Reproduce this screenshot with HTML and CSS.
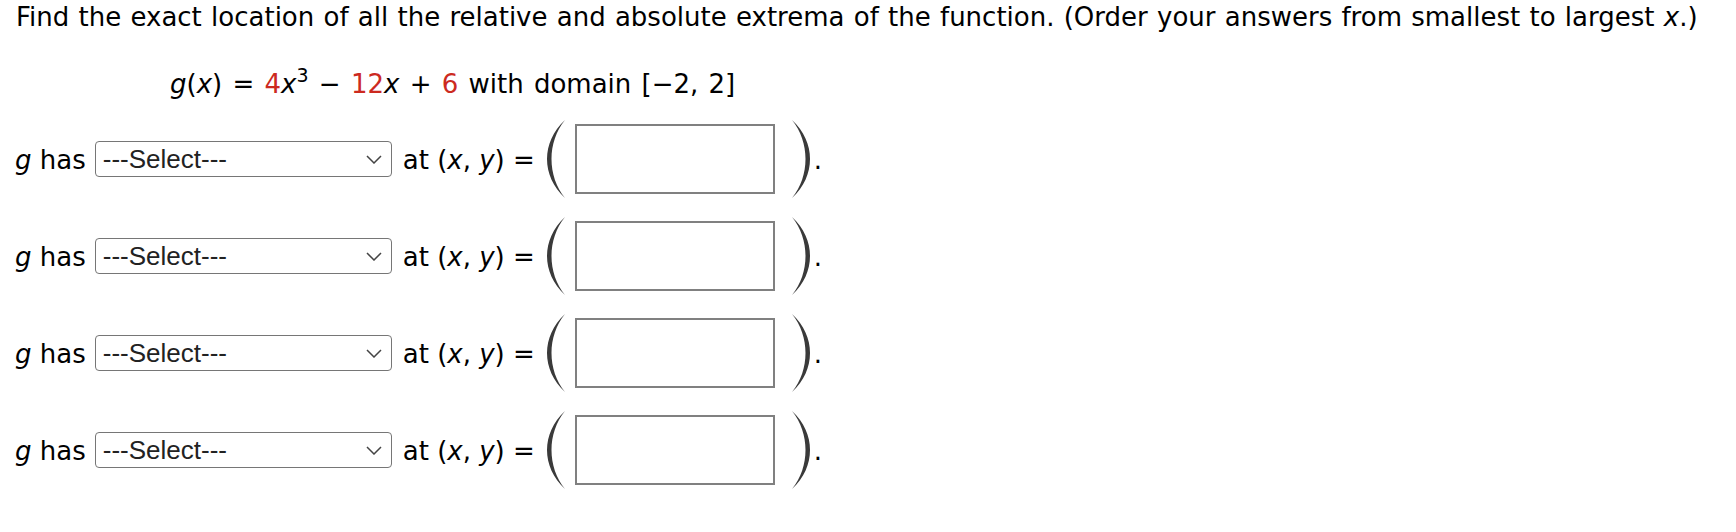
FILE: index.html
```html
<!DOCTYPE html>
<html lang="en">
<head>
<meta charset="utf-8">
<title>Extrema</title>
<link rel="stylesheet" href="styles.css">
</head>
<body>
<div class="page">
  <div class="title">Find the exact location of all the relative and absolute extrema of the function. (Order your answers from smallest to largest <i>x</i>.)</div>
  <div class="formula"><i>g</i>(<i>x</i>) = <span class="red">4</span><i>x</i><sup>3</sup> − <span class="red">12</span><i>x</i> + <span class="red">6</span> with domain [−2, 2]</div>

  <div class="rows">
    <div class="row">
      <span class="label"><i>g</i> has</span>
      <span class="sel-wrap"><select class="sel"><option>---Select---</option></select><svg class="chev" viewBox="0 0 16 9" width="16" height="9"><path d="M1 1 L8 8 L15 1" fill="none" stroke="#444" stroke-width="1.5"/></svg></span>
      <span class="at">at (<i>x</i>, <i>y</i>) =</span>
      <svg class="paren" viewBox="0 0 24 78" width="24" height="78"><path d="M22 0 C-2 22 -2 56 22 78 C4 56 4 22 22 0 Z" fill="#3a3a3a"/></svg>
      <input class="ans" type="text">
      <svg class="paren rp" viewBox="0 0 24 78" width="24" height="78"><path d="M2 0 C26 22 26 56 2 78 C20 56 20 22 2 0 Z" fill="#3a3a3a"/></svg>
      <span class="dot">.</span>
    </div>
    <div class="row">
      <span class="label"><i>g</i> has</span>
      <span class="sel-wrap"><select class="sel"><option>---Select---</option></select><svg class="chev" viewBox="0 0 16 9" width="16" height="9"><path d="M1 1 L8 8 L15 1" fill="none" stroke="#444" stroke-width="1.5"/></svg></span>
      <span class="at">at (<i>x</i>, <i>y</i>) =</span>
      <svg class="paren" viewBox="0 0 24 78" width="24" height="78"><path d="M22 0 C-2 22 -2 56 22 78 C4 56 4 22 22 0 Z" fill="#3a3a3a"/></svg>
      <input class="ans" type="text">
      <svg class="paren rp" viewBox="0 0 24 78" width="24" height="78"><path d="M2 0 C26 22 26 56 2 78 C20 56 20 22 2 0 Z" fill="#3a3a3a"/></svg>
      <span class="dot">.</span>
    </div>
    <div class="row">
      <span class="label"><i>g</i> has</span>
      <span class="sel-wrap"><select class="sel"><option>---Select---</option></select><svg class="chev" viewBox="0 0 16 9" width="16" height="9"><path d="M1 1 L8 8 L15 1" fill="none" stroke="#444" stroke-width="1.5"/></svg></span>
      <span class="at">at (<i>x</i>, <i>y</i>) =</span>
      <svg class="paren" viewBox="0 0 24 78" width="24" height="78"><path d="M22 0 C-2 22 -2 56 22 78 C4 56 4 22 22 0 Z" fill="#3a3a3a"/></svg>
      <input class="ans" type="text">
      <svg class="paren rp" viewBox="0 0 24 78" width="24" height="78"><path d="M2 0 C26 22 26 56 2 78 C20 56 20 22 2 0 Z" fill="#3a3a3a"/></svg>
      <span class="dot">.</span>
    </div>
    <div class="row">
      <span class="label"><i>g</i> has</span>
      <span class="sel-wrap"><select class="sel"><option>---Select---</option></select><svg class="chev" viewBox="0 0 16 9" width="16" height="9"><path d="M1 1 L8 8 L15 1" fill="none" stroke="#444" stroke-width="1.5"/></svg></span>
      <span class="at">at (<i>x</i>, <i>y</i>) =</span>
      <svg class="paren" viewBox="0 0 24 78" width="24" height="78"><path d="M22 0 C-2 22 -2 56 22 78 C4 56 4 22 22 0 Z" fill="#3a3a3a"/></svg>
      <input class="ans" type="text">
      <svg class="paren rp" viewBox="0 0 24 78" width="24" height="78"><path d="M2 0 C26 22 26 56 2 78 C20 56 20 22 2 0 Z" fill="#3a3a3a"/></svg>
      <span class="dot">.</span>
    </div>
  </div>
</div>
</body>
</html>
```

FILE: styles.css
```css
html, body {
  margin: 0;
  padding: 0;
  background: #fff;
}
body {
  font-family: "DejaVu Sans", Verdana, sans-serif;
  font-size: 26px;
  color: #000;
}
.page {
  padding: 3px 16px 0 16px;
}
.title {
  line-height: 29px;
  white-space: nowrap;
  word-spacing: 1px;
}
.formula {
  margin-top: 38px;
  padding-left: 154px;
  line-height: 29px;
  white-space: nowrap;
  word-spacing: 2px;
}
.formula sup {
  font-size: 19px;
  line-height: 0;
  vertical-align: 11px;
}
.red {
  color: #cc2a1f;
}
.rows {
  margin-top: 21px;
  display: flex;
  flex-direction: column;
  gap: 19px;
}
.row {
  display: flex;
  align-items: center;
  height: 78px;
  white-space: nowrap;
}
.label, .at, .dot {
  line-height: 29px;
  padding-top: 3px;
}
.label {
  margin-left: -1px;
}
.sel-wrap {
  position: relative;
  display: inline-block;
  margin-left: 9px;
  height: 36px;
  flex: none;
}
.sel {
  appearance: none;
  -webkit-appearance: none;
  box-sizing: border-box;
  width: 297px;
  height: 36px;
  margin: 0;
  padding: 0 0 0 7px;
  border: 1.5px solid #767676;
  border-radius: 4px;
  background: #fff;
  font-family: "Liberation Sans", Arial, sans-serif;
  font-size: 26px;
  color: #222;
  display: block;
}
.chev {
  position: absolute;
  right: 10px;
  top: 14px;
  pointer-events: none;
}
.at {
  margin-left: 11px;
  word-spacing: 0;
}
.paren {
  display: block;
  margin-left: 8px;
  flex: none;
}
.ans {
  box-sizing: border-box;
  width: 200px;
  height: 70px;
  margin: 0 0 0 8px;
  padding: 0;
  border: 2px solid #808080;
  border-radius: 0;
  background: #fff;
  flex: none;
}
.paren.rp {
  margin-left: 15px;
}
.dot {
  margin-left: 0px;
}
```
